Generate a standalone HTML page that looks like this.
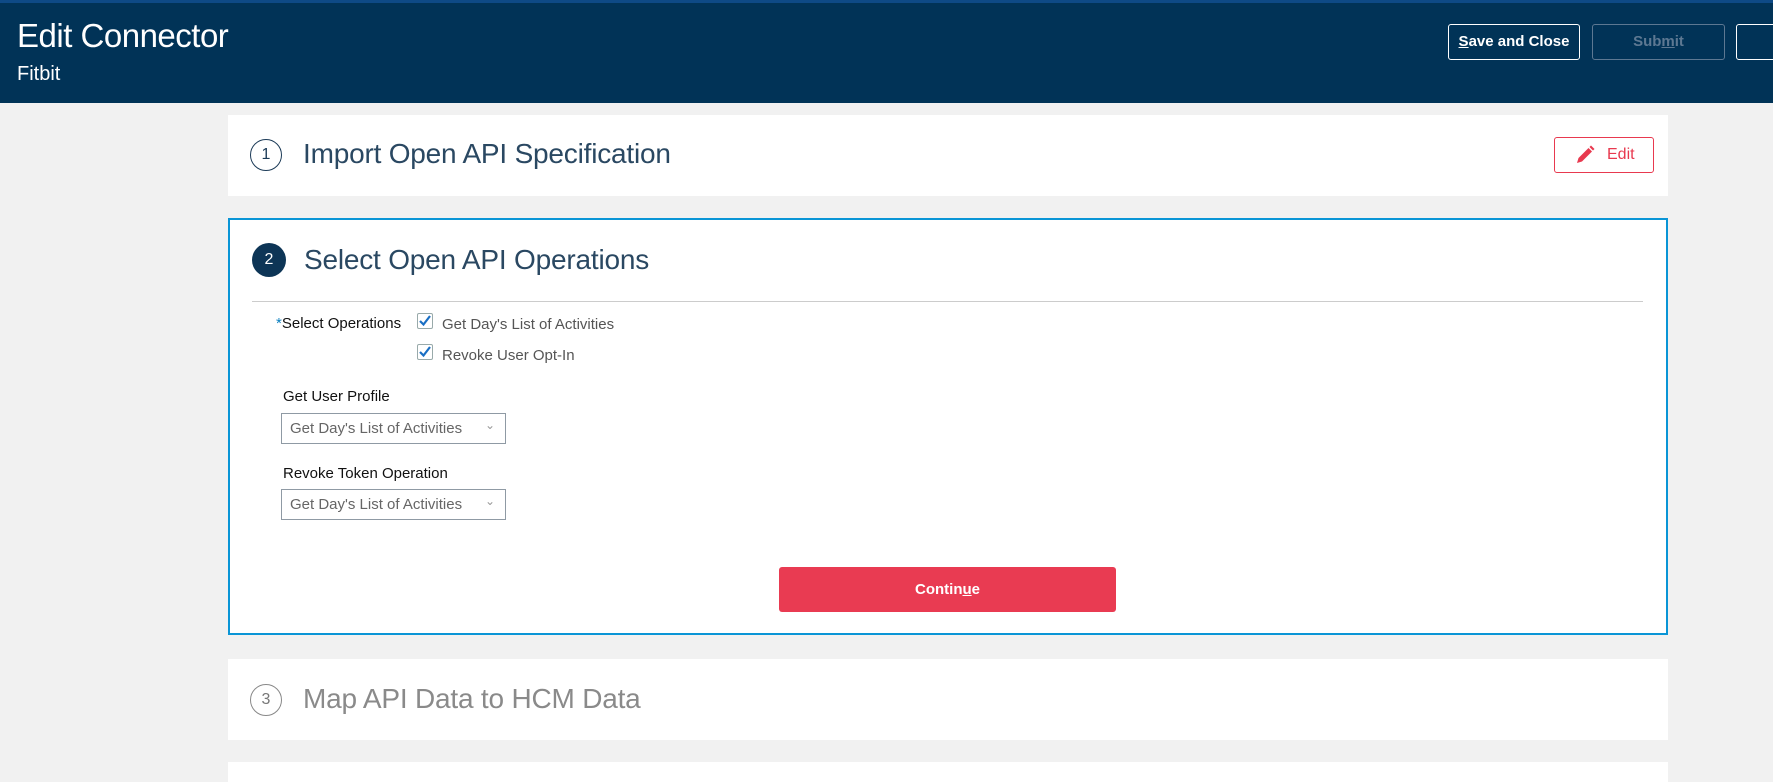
<!DOCTYPE html>
<html><head><meta charset="utf-8"><style>
*{box-sizing:border-box;margin:0;padding:0}
body{width:1773px;height:771px;overflow:hidden;background:#f1f1f1;font-family:"Liberation Sans",sans-serif;position:relative}
.hdr{position:absolute;left:0;top:0;width:1773px;height:103px;background:#013357;border-top:3px solid #0e4a86}
.t1{position:absolute;left:17px;top:14px;color:#fff;font-size:33px;font-weight:300;letter-spacing:-0.5px}
.t2{position:absolute;left:17px;top:60px;color:#fff;font-size:20px}
.btn{position:absolute;top:24px;height:36px;border:1px solid #fff;border-radius:3px;color:#fff;font-size:15px;font-weight:bold;text-align:center;line-height:34px}
.card{position:absolute;left:228px;width:1440px;background:#fff}
.circ{position:absolute;border-radius:50%;text-align:center;font-size:16px}
.ttl{position:absolute;font-size:28px;color:#2a4862;letter-spacing:-0.2px}
.lbl{position:absolute;font-size:15px;color:#111}
.cb{position:absolute;width:16px;height:16px;border:1px solid #9aa;border-radius:2px;background:#fff}
.sel{position:absolute;left:53px;width:225px;height:31px;border:1px solid #8f9aa4;font-size:15px;color:#666;padding:6px 8px}
.sel span{position:absolute;right:10px;top:4px;color:#999;font-size:12px}
</style></head><body>
<div class="hdr">
<div class="t1">Edit Connector</div>
<div class="t2">Fitbit</div>
</div>
<div class="btn" style="left:1448px;width:132px"><u>S</u>ave and Close</div>
<div class="btn" style="left:1592px;width:133px;border-color:#5d7892;color:#5d7892">Sub<u>m</u>it</div>
<div class="btn" style="left:1736px;width:60px"></div>

<div class="card" style="top:115px;height:81px">
<div class="circ" style="left:22px;top:24px;width:32px;height:32px;border:1.5px solid #1b3a57;color:#1b3a57;line-height:29px">1</div>
<div class="ttl" style="left:75px;top:23px">Import Open API Specification</div>
<div style="position:absolute;left:1326px;top:22px;width:100px;height:36px;border:1px solid #e8394f;border-radius:3px;color:#e8394f;font-size:16px;line-height:34px;padding-left:52px">Edit
<svg style="position:absolute;left:20px;top:7px" width="20" height="20" viewBox="0 0 20 20"><path d="M2 18 L3.5 13 L13.5 3 L17 6.5 L7 16.5 Z" fill="#e8394f"/><path d="M14.5 2 L16 0.5 L19.5 4 L18 5.5 Z" fill="#e8394f"/></svg></div>
</div>

<div class="card" style="top:218px;height:417px;border:2px solid #0a95d6">
<div class="circ" style="left:22px;top:23px;width:34px;height:34px;background:#0d3556;color:#fff;line-height:34px">2</div>
<div class="ttl" style="left:74px;top:24px">Select Open API Operations</div>
<div style="position:absolute;left:22px;top:81px;width:1391px;height:1px;background:#ccc"></div>
<div class="lbl" style="left:46px;top:95px"><span style="color:#0a7fbf">*</span>Select Operations</div>
<div class="cb" style="left:187px;top:93px"><svg width="14" height="14" viewBox="0 0 14 14" style="position:absolute;left:0;top:0"><path d="M2 7 L5.5 10.5 L12 2" stroke="#1a6fc4" stroke-width="2.2" fill="none"/></svg></div>
<div class="lbl" style="left:212px;top:96px;color:#555">Get Day's List of Activities</div>
<div class="cb" style="left:187px;top:124px"><svg width="14" height="14" viewBox="0 0 14 14" style="position:absolute;left:0;top:0"><path d="M2 7 L5.5 10.5 L12 2" stroke="#1a6fc4" stroke-width="2.2" fill="none"/></svg></div>
<div class="lbl" style="left:212px;top:127px;color:#555">Revoke User Opt-In</div>
<div class="lbl" style="left:53px;top:168px">Get User Profile</div>
<div class="sel" style="top:193px;left:51px">Get Day's List of Activities<span>&#8964;</span></div>
<div class="lbl" style="left:53px;top:245px">Revoke Token Operation</div>
<div class="sel" style="top:269px;left:51px">Get Day's List of Activities<span>&#8964;</span></div>
<div style="position:absolute;left:549px;top:347px;width:337px;height:45px;background:#e93b52;border-radius:3px;color:#fff;font-weight:bold;font-size:15px;text-align:center;line-height:45px">Contin<u>u</u>e</div>
</div>

<div class="card" style="top:659px;height:81px">
<div class="circ" style="left:22px;top:25px;width:32px;height:32px;border:1.5px solid #888;color:#777;line-height:29px">3</div>
<div class="ttl" style="left:75px;top:24px;color:#8a8a8a">Map API Data to HCM Data</div>
</div>
<div class="card" style="top:762px;height:20px"></div>
</body></html>
